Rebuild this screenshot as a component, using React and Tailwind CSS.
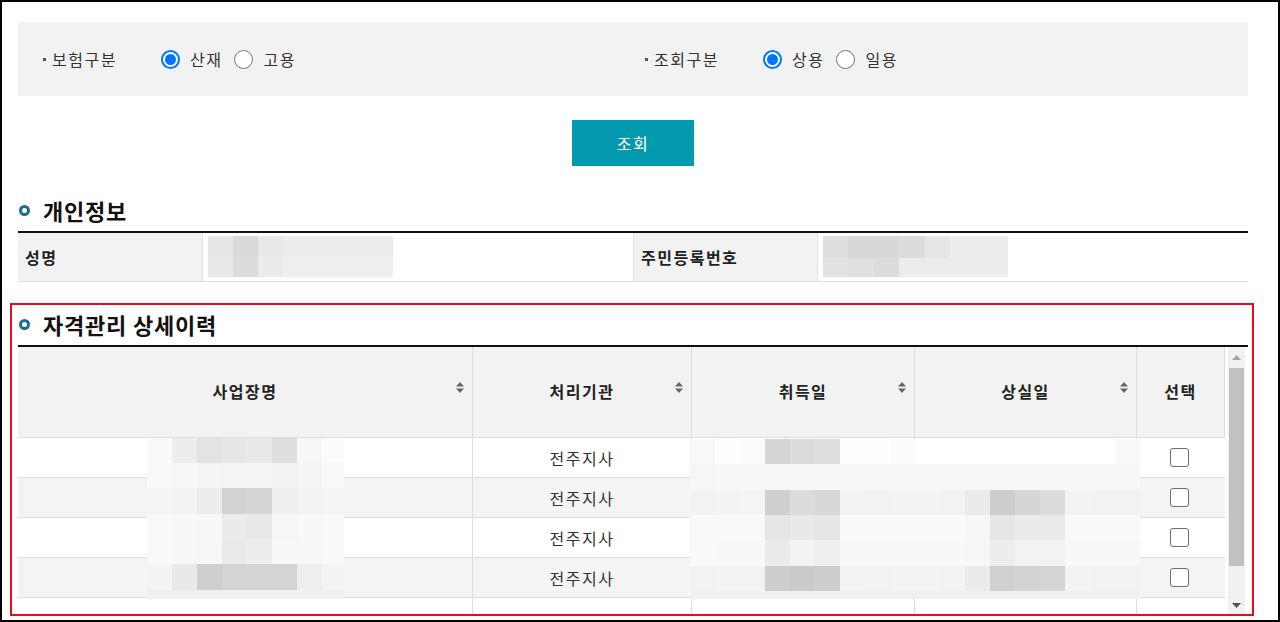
const g = (v) => `#${v}${v}${v}`;

function Mosaic({ widths, rows }) {
  return (
    <div className="flex flex-col">
      {rows.map((row, r) => (
        <div key={r} className="flex" style={{ height: row.h }}>
          {row.c.map((c, i) => (
            <div key={i} style={{ width: widths[i], background: g(c) }} />
          ))}
        </div>
      ))}
    </div>
  );
}

function Radio({ checked }) {
  return checked ? (
    <span className="flex h-[19px] w-[19px] items-center justify-center rounded-full border-2 border-[#0075ff] bg-white">
      <span className="h-[11px] w-[11px] rounded-full bg-[#0075ff]" />
    </span>
  ) : (
    <span className="h-[19px] w-[19px] rounded-full border border-[#767676] bg-white" />
  );
}

function RadioGroup({ label, options }) {
  return (
    <div className="flex items-center">
      <div className="flex w-[118px] items-center">
        <span className="h-[3px] w-[3px] bg-[#555555]" />
        <span className="ml-[6px]">{label}</span>
      </div>
      {options.map((opt, i) => (
        <div key={opt} className={i === 0 ? 'flex items-center' : 'ml-[12px] flex items-center'}>
          <Radio checked={i === 0} />
          <span className="ml-[10px]">{opt}</span>
        </div>
      ))}
    </div>
  );
}

function SectionTitle({ children }) {
  return (
    <div className="flex h-[42px] items-center border-b-2 border-[#111111] pb-[2px]">
      <span className="ml-[1px] h-[11px] w-[11px] rounded-full border-[3px] border-[#17708f]" />
      <span className="ml-[13px] text-[22px] font-bold tracking-[0.8px] text-[#111111]">{children}</span>
    </div>
  );
}

function SortIcon() {
  return (
    <svg width="8" height="11" viewBox="0 0 8 11" className="absolute right-[8px] top-[35px]">
      <path d="M4 0 L8 4.5 L0 4.5 Z" fill="#666666" />
      <path d="M0 6.5 L8 6.5 L4 11 Z" fill="#666666" />
    </svg>
  );
}

function Checkbox() {
  return <span className="h-[19px] w-[19px] rounded-[3px] border-[1.5px] border-[#6e6e6e] bg-white" />;
}

const columns = [
  { name: '사업장명', w: 'w-[455px]', sort: true },
  { name: '처리기관', w: 'w-[219px]', sort: true },
  { name: '취득일', w: 'w-[223px]', sort: true },
  { name: '상실일', w: 'w-[222px]', sort: true },
  { name: '선택', w: 'w-[88px]', sort: false },
];

const nameMosaic = {
  widths: [25, 25, 25, 25, 25, 25, 25, 10],
  rows: [
    { h: 20, c: ['e6', 'd9', 'e9', 'ec', 'ec', 'ec', 'ec', 'ec'] },
    { h: 21, c: ['e8', 'dc', 'eb', 'ee', 'ee', 'ee', 'ee', 'ee'] },
  ],
};

const idMosaic = {
  widths: [25, 26, 25, 26, 25, 25, 25, 8],
  rows: [
    { h: 22, c: ['de', 'd8', 'd8', 'dc', 'e6', 'ec', 'ec', 'ec'] },
    { h: 19, c: ['e2', 'e0', 'dc', 'ec', 'ec', 'ec', 'ec', 'ec'] },
  ],
};

const bizMosaic = {
  widths: [25, 25, 25, 25, 25, 25, 25, 22],
  rows: [
    { h: 25, c: ['fa', 'ed', 'e3', 'e6', 'e9', 'de', 'f7', 'fc'] },
    { h: 25, c: ['f9', 'f7', 'f5', 'f4', 'f4', 'f3', 'f5', 'f9'] },
    { h: 26, c: ['f4', 'f3', 'ec', 'd2', 'd6', 'ef', 'f3', 'f4'] },
    { h: 25, c: ['f9', 'f8', 'f7', 'eb', 'e8', 'f6', 'f8', 'f9'] },
    { h: 25, c: ['f9', 'f8', 'f7', 'ea', 'ed', 'f7', 'f8', 'f9'] },
    { h: 26, c: ['f3', 'e9', 'cf', 'd4', 'd4', 'd4', 'ee', 'f3'] },
    { h: 9, c: ['f0', 'f0', 'f0', 'f0', 'f0', 'f0', 'f0', 'f0'] },
  ],
};

const dateMosaic = {
  widths: Array(18).fill(25),
  rows: [
    { h: 25, c: ['f9', 'fe', 'fb', 'd5', 'dc', 'de', 'fe', 'fe', 'fc', 'ff', 'ff', 'ff', 'ff', 'ff', 'ff', 'ff', 'ff', 'f9'] },
    { h: 26, c: ['f6', 'f7', 'f7', 'f7', 'f7', 'f7', 'f7', 'f7', 'f7', 'f7', 'f7', 'f7', 'f7', 'f7', 'f7', 'f7', 'f7', 'f7'] },
    { h: 25, c: ['f2', 'f3', 'f4', 'cf', 'dc', 'd7', 'f3', 'f2', 'f3', 'f3', 'f2', 'eb', 'cd', 'd6', 'dc', 'f3', 'f2', 'f2'] },
    { h: 25, c: ['f9', 'f9', 'f9', 'e5', 'e9', 'e6', 'fa', 'fa', 'fa', 'fa', 'fa', 'f7', 'e6', 'eb', 'eb', 'fa', 'fa', 'fa'] },
    { h: 26, c: ['f9', 'f8', 'f8', 'eb', 'f2', 'ef', 'f8', 'f8', 'f8', 'f8', 'f8', 'f7', 'ed', 'f3', 'f3', 'f8', 'f8', 'f8'] },
    { h: 25, c: ['f2', 'f3', 'f3', 'cd', 'cb', 'cd', 'f3', 'f2', 'f3', 'f3', 'f2', 'eb', 'd0', 'd3', 'd5', 'f3', 'f2', 'f2'] },
    { h: 8, c: Array(18).fill('f0') },
  ],
};

const rows = ['전주지사', '전주지사', '전주지사', '전주지사', ''];

export default function App() {
  return (
    <div className="h-[622px] w-[1280px] overflow-hidden border-2 border-black bg-white font-['Noto_Sans_CJK_KR','Noto_Sans',sans-serif] text-[16px] tracking-[1.5px] text-[#333333]">
      <div className="w-[1246px] pl-[16px]">
        <div className="mt-[20px] flex h-[74px] w-[1230px] items-center bg-[#f2f2f2] pl-[25px]">
          <div className="w-[602px]">
            <RadioGroup label="보험구분" options={['산재', '고용']} />
          </div>
          <RadioGroup label="조회구분" options={['상용', '일용']} />
        </div>

        <div className="mt-[24px] flex w-[1230px] justify-center">
          <button type="button" className="h-[46px] w-[122px] bg-[#0399ae] pb-[1px] text-[16px] tracking-[1.5px] text-white">
            조회
          </button>
        </div>

        <div className="mt-[25px] w-[1230px]">
          <SectionTitle>개인정보</SectionTitle>
          <div className="flex h-[49px] border-b border-[#dddddd]">
            <div className="flex w-[185px] items-center border-r border-[#e3e3e3] bg-[#f2f2f2] pb-[1px] pl-[7px] font-semibold text-[#222222]">
              성명
            </div>
            <div className="w-[430px] px-[5px] pt-[3px]">
              <Mosaic {...nameMosaic} />
            </div>
            <div className="flex w-[185px] items-center border-x border-[#e3e3e3] bg-[#f2f2f2] pb-[1px] pl-[7px] font-semibold text-[#222222]">
              주민등록번호
            </div>
            <div className="px-[5px] pt-[3px]">
              <Mosaic {...idMosaic} />
            </div>
          </div>
        </div>

        <div className="-ml-[8px] mt-[21px] w-[1244px] border-2 border-[#e3101a] pl-[6px] pr-[4px]">
          <SectionTitle>자격관리 상세이력</SectionTitle>
          <div className="flex h-[267px] overflow-hidden">
            <div className="relative w-[1207px]">
              <div className="flex h-[91px] border-b border-[#dddddd] bg-[#f2f2f2]">
                {columns.map((col) => (
                  <div
                    key={col.name}
                    className={`relative flex ${col.w} items-center justify-center border-r border-[#dddddd] pb-[2px] font-semibold text-[#222222]`}
                  >
                    {col.name}
                    {col.sort && <SortIcon />}
                  </div>
                ))}
              </div>
              {rows.map((text, i) => (
                <div
                  key={i}
                  className={i % 2 === 1 ? 'flex h-[40px] border-b border-[#dddddd] bg-[#f4f4f4]' : 'flex h-[40px] border-b border-[#dddddd] bg-white'}
                >
                  <div className="w-[455px] border-r border-[#dddddd]" />
                  <div className="flex w-[219px] items-center justify-center border-r border-[#dddddd]">{text}</div>
                  <div className="w-[223px] border-r border-[#dddddd]" />
                  <div className="w-[222px] border-r border-[#dddddd]" />
                  <div className="flex w-[88px] items-center justify-center pr-[3px]">{text && <Checkbox />}</div>
                </div>
              ))}
              <div className="absolute left-[129px] top-[91px]">
                <Mosaic {...bizMosaic} />
              </div>
              <div className="absolute left-[672px] top-[92px]">
                <Mosaic {...dateMosaic} />
              </div>
            </div>
            <div className="ml-[3px] flex w-[17px] flex-col bg-[#f1f1f1]">
              <div className="flex h-[21px] items-center justify-center">
                <svg width="9" height="5" viewBox="0 0 9 5">
                  <path d="M4.5 0 L9 5 L0 5 Z" fill="#a3a3a3" />
                </svg>
              </div>
              <div className="mx-[1px] h-[198px] bg-[#c1c1c1]" />
              <div className="flex-1" />
              <div className="flex h-[17px] items-center justify-center">
                <svg width="9" height="5" viewBox="0 0 9 5">
                  <path d="M0 0 L9 0 L4.5 5 Z" fill="#505050" />
                </svg>
              </div>
            </div>
          </div>
        </div>
      </div>
    </div>
  );
}
